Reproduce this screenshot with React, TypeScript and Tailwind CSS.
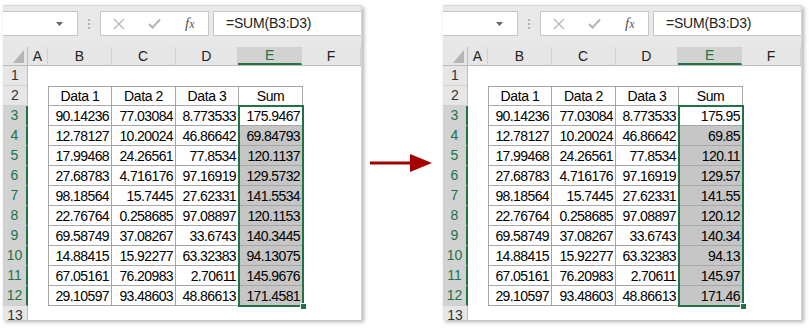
import React from "react";

const rows = [
  ["90.14236", "77.03084", "8.773533", "175.9467", "175.95"],
  ["12.78127", "10.20024", "46.86642", "69.84793", "69.85"],
  ["17.99468", "24.26561", "77.8534", "120.1137", "120.11"],
  ["27.68783", "4.716176", "97.16919", "129.5732", "129.57"],
  ["98.18564", "15.7445", "27.62331", "141.5534", "141.55"],
  ["22.76764", "0.258685", "97.08897", "120.1153", "120.12"],
  ["69.58749", "37.08267", "33.6743", "140.3445", "140.34"],
  ["14.88415", "15.92277", "63.32383", "94.13075", "94.13"],
  ["67.05161", "76.20983", "2.70611", "145.9676", "145.97"],
  ["29.10597", "93.48603", "48.86613", "171.4581", "171.46"],
];

const font = { fontFamily: '"Liberation Sans", Arial, sans-serif' };

const cols = [
  { name: "A", w: "w-[20px]" },
  { name: "B", w: "w-[64px]" },
  { name: "C", w: "w-[64px]" },
  { name: "D", w: "w-[63px]" },
  { name: "E", w: "w-[64px]" },
  { name: "F", w: "w-[59px]" },
];

const Toolbar = () => (
  <div className="h-[42px] bg-[#e8e8e8] border-t border-[#d6d6d6] pt-[5px] flex items-start">
    {/* name box */}
    <div className="w-[75px] h-[25px] bg-white border border-[#c6c6c6] border-l-0 flex items-center justify-end pr-[14px]">
      <svg width="7" height="4" viewBox="0 0 7 4">
        <polygon points="0,0 7,0 3.5,4" fill="#666" />
      </svg>
    </div>
    <div className="w-[22px] h-[25px] flex flex-col items-center justify-center gap-[2px]">
      <div className="w-[2px] h-[2px] bg-[#b0b0b0]" />
      <div className="w-[2px] h-[2px] bg-[#b0b0b0]" />
      <div className="w-[2px] h-[2px] bg-[#b0b0b0]" />
    </div>
    <div className="w-[109px] h-[25px] bg-white border border-[#c6c6c6] flex items-center">
      <svg width="12" height="12" viewBox="0 0 12 12" className="ml-[12px]">
        <path d="M1 1 L11 11 M11 1 L1 11" stroke="#b4b4b4" strokeWidth="1.3" />
      </svg>
      <svg width="13" height="11" viewBox="0 0 13 11" className="ml-[23px]">
        <path d="M1 6 L4.5 9.5 L12 1.5" stroke="#b4b4b4" strokeWidth="2" fill="none" />
      </svg>
      <span
        className="ml-[24px] text-[15px] italic text-[#555] leading-none"
        style={{ fontFamily: '"Liberation Serif", "Times New Roman", serif' }}
      >
        f<span className="text-[12px]">x</span>
      </span>
    </div>
    <div className="ml-[4px] flex-1 h-[25px] bg-white border border-[#c6c6c6] border-r-0 flex items-center pl-[12px]">
      <span className="text-[14px] tracking-[-0.2px] text-[#222]" style={font}>
        =SUM(B3:D3)
      </span>
    </div>
  </div>
);

const Sheet = ({ rounded }: { rounded: boolean }) => (
  <div
    className="relative w-[359px] h-[315px] bg-white overflow-hidden shadow-[2px_2px_4px_rgba(0,0,0,0.3)] border-r border-[#d6d6d6]"
    style={font}
  >
    <Toolbar />

    {/* column headers */}
    <div className="flex h-[19px] bg-[#e6e6e6] border-b border-[#bcbcbc]">
      <div className="w-[25px] h-full border-r border-[#bcbcbc] flex items-end justify-end pr-[3px] pb-[2px]">
        <svg width="11" height="13" viewBox="0 0 11 13">
          <polygon points="11,0 11,13 0,13" fill="#b4b4b4" />
        </svg>
      </div>
      {cols.map((c) => (
        <div
          key={c.name}
          className={`${c.w} h-full flex items-center justify-center text-[14px] border-r border-[#d0d0d0] ${
            c.name === "E" ? "bg-[#d2d2d2] text-[#217346] border-b-2 border-b-[#217346]" : "text-[#222]"
          }`}
        >
          {c.name}
        </div>
      ))}
    </div>

    {/* grid rows */}
    {Array.from({ length: 13 }, (_, i) => i + 1).map((r) => {
      const sel = r >= 3 && r <= 12;
      const data = sel ? rows[r - 3] : null;
      return (
        <div key={r} className="flex h-[20px]">
          <div
            className={`w-[25px] h-full flex items-center justify-center text-[14px] border-b border-[#d0d0d0] ${
              sel
                ? "bg-[#d2d2d2] text-[#217346] border-r-2 border-r-[#217346]"
                : "bg-[#e6e6e6] text-[#333] border-r border-r-[#bcbcbc]"
            }`}
          >
            {r}
          </div>
          <div className="w-[20px] h-full" />
          {r === 2 &&
            ["Data 1", "Data 2", "Data 3", "Sum"].map((t, j) => (
              <div
                key={t}
                className={`${cols[j + 1].w} h-full border-t border-b border-r border-[#a6a6a6] ${
                  j === 0 ? "border-l" : ""
                } flex items-center justify-center text-[14px] tracking-[-0.4px] text-black`}
              >
                {t}
              </div>
            ))}
          {data &&
            [data[0], data[1], data[2], rounded ? data[4] : data[3]].map((t, j) => (
              <div
                key={j}
                className={`${cols[j + 1].w} h-full border-b border-r border-[#a6a6a6] ${j === 0 ? "border-l" : ""} ${
                  j === 3 && r >= 4 ? "bg-[#c6c6c6]" : ""
                } flex items-center justify-end pr-[2px] pt-[1px] text-[14px] tracking-[-0.6px] text-black`}
              >
                {t}
              </div>
            ))}
        </div>
      );
    })}

    {/* selection E3:E12 */}
    <div className="absolute left-[235px] top-[100px] w-[66px] h-[202px] border-2 border-[#217346] pointer-events-none" />
    <div className="absolute left-[297px] top-[298px] w-[7px] h-[7px] bg-white" />
    <div className="absolute left-[298px] top-[299px] w-[5px] h-[5px] bg-[#217346]" />
  </div>
);

export default function App() {
  return (
    <div className="w-[809px] h-[328px] bg-white flex items-start pl-[3px] pt-[5px]">
      <Sheet rounded={false} />
      <div className="w-[81px] h-[315px] flex items-center pl-[8px]">
        <svg width="62" height="18" viewBox="0 0 62 18">
          <rect x="0" y="7.5" width="42" height="3" fill="#a40000" />
          <polygon points="40,0 62,9 40,18" fill="#a40000" />
        </svg>
      </div>
      <Sheet rounded={true} />
    </div>
  );
}
